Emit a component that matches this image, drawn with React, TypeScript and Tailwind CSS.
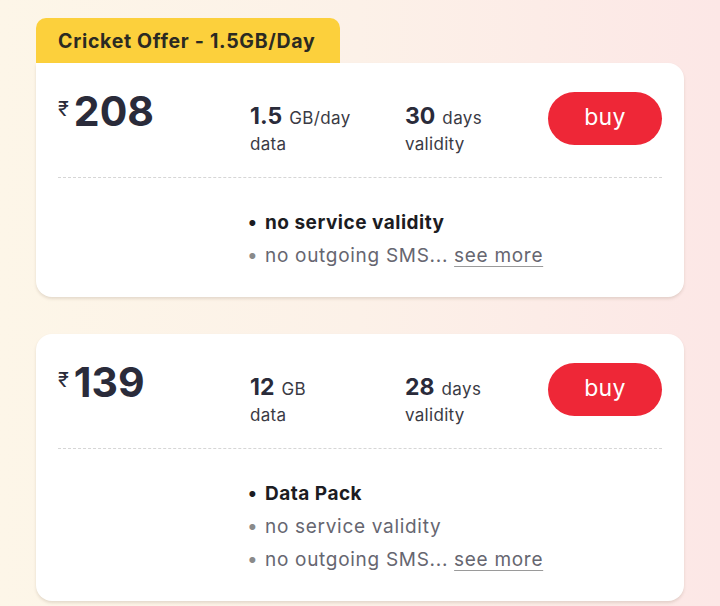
import React from "react";

type Plan = {
  price: string;
  data: string;
  dataUnit: string;
  days: string;
  tag?: string;
  bullets: { text: string; strong?: boolean }[];
};

const plans: Plan[] = [
  {
    price: "208",
    data: "1.5",
    dataUnit: "GB/day",
    days: "30",
    tag: "Cricket Offer - 1.5GB/Day",
    bullets: [{ text: "no service validity", strong: true }, { text: "no outgoing SMS..." }],
  },
  {
    price: "139",
    data: "12",
    dataUnit: "GB",
    days: "28",
    bullets: [{ text: "Data Pack", strong: true }, { text: "no service validity" }, { text: "no outgoing SMS..." }],
  },
];

const Stat = ({ value, unit, label }: { value: string; unit: string; label: string }) => (
  <div className="flex flex-col pt-[14px]">
    <div className="flex items-baseline gap-[7px] leading-none">
      <span className="text-[23px] font-bold text-[#2a2b3a]">{value}</span>
      <span className="text-[17px] text-[#3a3a44] tracking-[0.4px]">{unit}</span>
    </div>
    <div className="text-[17px] leading-none mt-[8px] text-[#3a3a44] tracking-[0.3px]">{label}</div>
  </div>
);

const PlanCard = ({ plan }: { plan: Plan }) => (
  <div className="flex flex-col">
    {plan.tag && (
      <div className="w-[304px] h-[45px] rounded-t-[10px] bg-[#fcd03c] flex items-center pl-[22px] pt-[2px] text-[19.5px] font-bold text-[#2b2a22] tracking-[0.7px]">
        {plan.tag}
      </div>
    )}
    <div
      className={`bg-white ${plan.tag ? "rounded-b-[16px] rounded-tr-[16px]" : "rounded-[16px]"} shadow-[0_2px_3px_rgba(120,100,80,0.18)] px-[22px] pt-[28px]`}
    >
      <div className="flex items-start h-[54px]">
        <div className="w-[192px] flex items-start">
          <span className="text-[20px] leading-none mt-[8px] mr-[5px] text-[#2a2b3a]">₹</span>
          <span className="text-[41px] leading-none font-bold text-[#2a2b3a]">{plan.price}</span>
        </div>
        <div className="w-[155px]">
          <Stat value={plan.data} unit={plan.dataUnit} label="data" />
        </div>
        <div className="flex-1">
          <Stat value={plan.days} unit="days" label="validity" />
        </div>
        <button className="w-[114px] h-[53px] mt-[1px] rounded-full bg-[#ee2737] text-white text-[23px] leading-none pb-[3px] tracking-[0.3px]">
          buy
        </button>
      </div>
      <div className="mt-[32px] border-t border-dashed border-[#d6d6d6]" />
      <ul className="pl-[189px] pt-[28px] pb-[25px] text-[19px] leading-[33px]">
        {plan.bullets.map((b, i) => (
          <li key={i} className="flex items-center">
            <span className={`w-[18px] ${b.strong ? "text-[#1c1c22]" : "text-[#8a8a8a]"}`}>•</span>
            <span className={b.strong ? "font-bold text-[#1c1c22] tracking-[0.5px]" : "text-[#666670] tracking-[0.7px]"}>
              {b.text}
              {i === plan.bullets.length - 1 && (
                <>
                  {" "}
                  <span className="underline decoration-[1px] underline-offset-[4px] decoration-[#9a9a9a]">see more</span>
                </>
              )}
            </span>
          </li>
        ))}
      </ul>
    </div>
  </div>
);

export default function App() {
  return (
    <div
      className="w-[720px] h-[606px] overflow-hidden bg-gradient-to-r from-[#fdf6e8] via-[#fcf1e8] to-[#fce7e6] pl-[36px] pt-[18px]"
      style={{ fontFamily: "Inter, 'Noto Sans', sans-serif" }}
    >
      <div className="w-[648px] flex flex-col gap-[37px]">
        {plans.map((p) => (
          <PlanCard key={p.price} plan={p} />
        ))}
      </div>
    </div>
  );
}
